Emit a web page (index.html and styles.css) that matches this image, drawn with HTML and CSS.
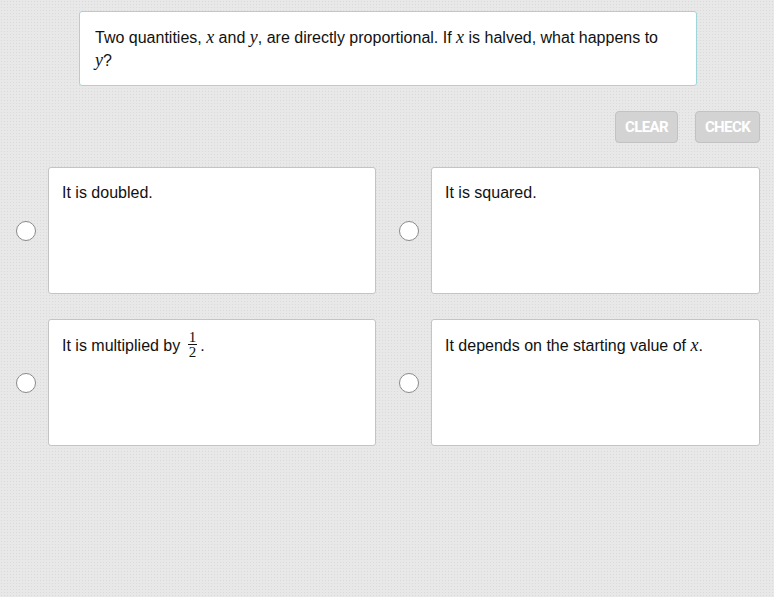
FILE: index.html
```html
<!DOCTYPE html>
<html>
<head>
<meta charset="utf-8">
<link rel="stylesheet" href="styles.css">
</head>
<body>
<div class="page">
  <div class="question">
    Two quantities, <span class="mv">x</span> and <span class="mv">y</span>, are directly proportional. If <span class="mv">x</span> is halved, what happens to <span class="mv">y</span>?
  </div>
  <div class="actions">
    <button class="btn">CLEAR</button>
    <button class="btn">CHECK</button>
  </div>
  <div class="choices">
    <div class="choice">
      <span class="radio"></span>
      <div class="card">It is doubled.</div>
    </div>
    <div class="choice">
      <span class="radio"></span>
      <div class="card">It is squared.</div>
    </div>
    <div class="choice">
      <span class="radio"></span>
      <div class="card card-frac">It is multiplied by <span class="frac"><span class="num">1</span><span class="den">2</span></span>.</div>
    </div>
    <div class="choice">
      <span class="radio"></span>
      <div class="card">It depends on the starting value of <span class="mv">x</span>.</div>
    </div>
  </div>
</div>
</body>
</html>
```

FILE: styles.css
```css
html, body {
  margin: 0;
  padding: 0;
}
body {
  width: 774px;
  height: 597px;
  background-color: #e8e8e8;
  background-image: radial-gradient(circle, #dadada 0.7px, transparent 0.9px);
  background-size: 3px 3px;
  font-family: "Liberation Sans", Arial, sans-serif;
  color: #111;
  overflow: hidden;
}
.page {
  padding-top: 11px;
}
.question {
  margin-left: 79px;
  width: 618px;
  box-sizing: border-box;
  background: #fff;
  border: 1px solid #9fd6dc;
  border-radius: 3px;
  padding: 14px 30px 14px 15px;
  font-size: 16px;
  line-height: 22px;
  height: 75px;
}
.mv {
  font-family: "Liberation Serif", "Times New Roman", serif;
  font-style: italic;
  font-size: 18px;
}
.actions {
  display: flex;
  justify-content: flex-end;
  gap: 17px;
  padding-right: 14px;
  margin-top: 25px;
}
.btn {
  height: 32px;
  box-sizing: border-box;
  padding: 0;
  background: #d3d3d3;
  border: 1px solid #c2c2c2;
  border-radius: 4px;
  color: #fff;
  font-family: "Roboto", "Liberation Sans", sans-serif;
  font-weight: 700;
  font-size: 15px;
  letter-spacing: -0.6px;
}
.btn:first-child { width: 63px; }
.btn:last-child { width: 65px; }
.choices {
  margin-top: 24px;
  margin-left: 16px;
  display: grid;
  grid-template-columns: 360px 361px;
  column-gap: 23px;
  row-gap: 25px;
}
.choice {
  display: flex;
  align-items: center;
  gap: 12px;
}
.radio {
  width: 20px;
  height: 20px;
  box-sizing: border-box;
  border: 1px solid #8a8a8a;
  border-radius: 50%;
  background: #fff;
  flex: none;
}
.card {
  flex: 1;
  height: 127px;
  box-sizing: border-box;
  background: #fff;
  border: 1px solid #c4c4c4;
  border-radius: 3px;
  padding: 14px 14px 13px 13px;
  font-size: 16px;
  line-height: 22px;
}
.card-frac {
  padding-top: 15px;
}
.frac {
  display: inline-block;
  vertical-align: middle;
  text-align: center;
  font-family: "Liberation Serif", "Times New Roman", serif;
  font-size: 15px;
  line-height: 12px;
  margin: -4px 3px 0 3px;
}
.num {
  display: block;
  border-bottom: 1px solid #111;
  padding: 0 1px 1px;
}
.den {
  display: block;
  padding-top: 1px;
}
```
